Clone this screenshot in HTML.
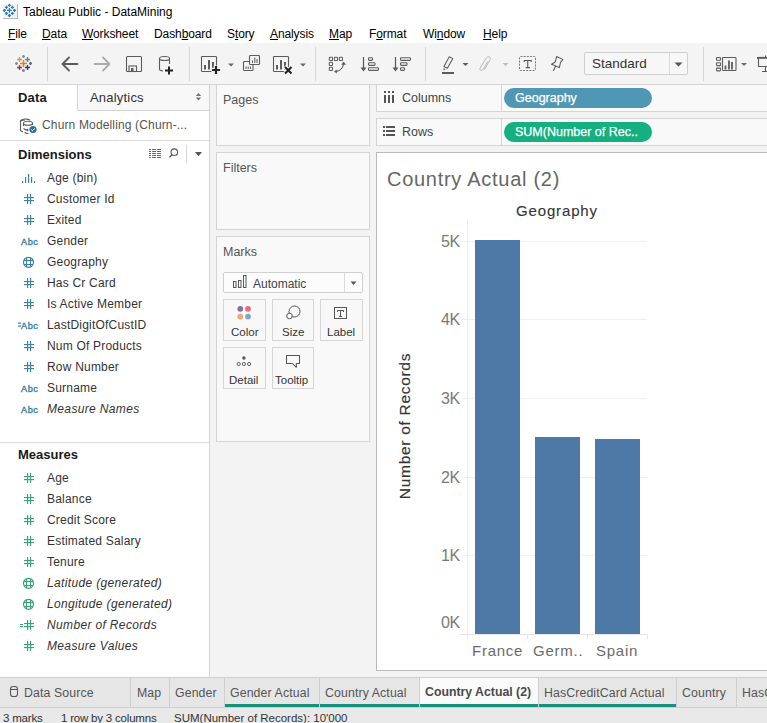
<!DOCTYPE html>
<html><head><meta charset="utf-8"><style>
*{box-sizing:border-box;margin:0;padding:0}
html,body{width:767px;height:723px;overflow:hidden;background:#fff;font-family:"Liberation Sans",sans-serif;color:#333}
.a{position:absolute}
.t{position:absolute;white-space:nowrap;line-height:1}
.menu{font-size:12px;color:#000;top:27.5px;letter-spacing:-0.1px}
.menu u{text-decoration:underline;text-underline-offset:1px;text-decoration-thickness:1px}
.card{position:absolute;background:#f9f9f9;border:1px solid #d4d4d4}
.fld{font-size:12px;color:#333;letter-spacing:0.2px}
svg{position:absolute;overflow:visible}
</style></head><body>
<div class="a" style="left:0px;top:0px;width:767px;height:43px;background:#fff"></div>
<svg style="left:0px;top:0px" width="25" height="25" viewBox="0 0 25 25"><rect x="3" y="3.7" width="14" height="14" fill="#f2f2f2"/><rect x="17" y="4" width="1" height="14.5" fill="#b8b8b8"/><rect x="3" y="18" width="15" height="1" fill="#b8b8b8"/><path d="M7.0 10.4H11.8M9.4 8.0V12.8" stroke="#2f7ab8" stroke-width="1.2"/><path d="M7.9 5.3H10.9M9.4 3.8V6.8" stroke="#2f7ab8" stroke-width="1.3"/><path d="M7.9 15.5H10.9M9.4 14.0V17.0" stroke="#2f7ab8" stroke-width="1.3"/><path d="M2.9000000000000004 10.4H5.9M4.4 8.9V11.9" stroke="#2f7ab8" stroke-width="1.3"/><path d="M13.0 10.4H16.0M14.5 8.9V11.9" stroke="#2f7ab8" stroke-width="1.3"/><path d="M4.9 7.3H7.9M6.4 5.8V8.8" stroke="#2f7ab8" stroke-width="1.3"/><path d="M10.9 7.3H13.9M12.4 5.8V8.8" stroke="#2f7ab8" stroke-width="1.3"/><path d="M4.9 13.4H7.9M6.4 11.9V14.9" stroke="#2f7ab8" stroke-width="1.3"/><path d="M10.9 13.4H13.9M12.4 11.9V14.9" stroke="#2f7ab8" stroke-width="1.3"/></svg>
<div class="t" style="left:23px;top:6px;font-size:12px;color:#000">Tableau Public - DataMining</div>
<div class="t menu" style="left:8px"><u>F</u>ile</div>
<div class="t menu" style="left:42px"><u>D</u>ata</div>
<div class="t menu" style="left:82px"><u>W</u>orksheet</div>
<div class="t menu" style="left:154px">Dash<u>b</u>oard</div>
<div class="t menu" style="left:227px">S<u>t</u>ory</div>
<div class="t menu" style="left:270px"><u>A</u>nalysis</div>
<div class="t menu" style="left:329px"><u>M</u>ap</div>
<div class="t menu" style="left:369px">F<u>o</u>rmat</div>
<div class="t menu" style="left:423px">Wi<u>n</u>dow</div>
<div class="t menu" style="left:483px"><u>H</u>elp</div>
<div class="a" style="left:0px;top:43px;width:767px;height:41px;background:#f4f4f4"></div>
<div class="a" style="left:47px;top:47px;width:1px;height:34px;background:#d6d6d6"></div>
<div class="a" style="left:189px;top:47px;width:1px;height:34px;background:#d6d6d6"></div>
<div class="a" style="left:315px;top:47px;width:1px;height:34px;background:#d6d6d6"></div>
<div class="a" style="left:425px;top:47px;width:1px;height:34px;background:#d6d6d6"></div>
<div class="a" style="left:703px;top:47px;width:1px;height:34px;background:#d6d6d6"></div>
<svg style="left:0px;top:0px" width="767" height="84" viewBox="0 0 767 84"><path d="M20.0 63.5H27.0M23.5 60.0V67.0" stroke="#e8762c" stroke-width="1.6"/><path d="M22.0 56.5H25.0M23.5 55.0V58.0" stroke="#7099a6" stroke-width="1.4"/><path d="M17.0 59.5H22.0M19.5 57.0V62.0" stroke="#eb912b" stroke-width="1.4"/><path d="M25.0 59.5H30.0M27.5 57.0V62.0" stroke="#5b879b" stroke-width="1.4"/><path d="M15.0 63.5H18.0M16.5 62.0V65.0" stroke="#7099a6" stroke-width="1.4"/><path d="M29.0 63.5H32.0M30.5 62.0V65.0" stroke="#59679e" stroke-width="1.4"/><path d="M17.0 67.5H22.0M19.5 65.0V70.0" stroke="#c72037" stroke-width="1.4"/><path d="M25.0 67.5H30.0M27.5 65.0V70.0" stroke="#1f457e" stroke-width="1.4"/><path d="M22.0 70.5H25.0M23.5 69.0V72.0" stroke="#7b7fb0" stroke-width="1.4"/></svg>
<svg style="left:0px;top:0px" width="767" height="84" viewBox="0 0 767 84"><path d="M62.5 64H77.5M69 57.5L62.5 64L69 70.5" stroke="#5c5c5c" stroke-width="1.8" fill="none" stroke-linecap="round" stroke-linejoin="round"/><path d="M94.5 64H109.5M103 57.5L109.5 64L103 70.5" stroke="#aaaaaa" stroke-width="1.8" fill="none" stroke-linecap="round" stroke-linejoin="round"/><rect x="126.5" y="56.5" width="15" height="15" rx="1" stroke="#5c5c5c" stroke-width="1.1" fill="none"/><rect x="129" y="66" width="7.5" height="5.5" stroke="#5c5c5c" stroke-width="1.1" fill="none"/><rect x="131" y="68" width="2.5" height="3.5" fill="#5c5c5c"/><ellipse cx="164.5" cy="58.5" rx="5" ry="2" stroke="#5c5c5c" stroke-width="1.1" fill="none"/><path d="M159.5 58.5V69C159.5 70 161 70.8 163 71M169.5 58.5V64" stroke="#5c5c5c" stroke-width="1.1" fill="none"/><path d="M165 70.5H173M169 66.5V74.5" stroke="#222" stroke-width="2"/><rect x="201.5" y="56.5" width="15" height="15" rx="0.8" stroke="#5c5c5c" stroke-width="1.1" fill="none"/><path d="M205 69.5V65M209 69.5V60M213 69.5V62" stroke="#5c5c5c" stroke-width="2"/><path d="M211.5 70H220.5M216 65.5V74.5" stroke="#f4f4f4" stroke-width="4.5"/><path d="M212 70H220M216 66V74" stroke="#222" stroke-width="2.2" /><path d="M228 63.5H234L231 66.5Z" fill="#6a6a6a"/><rect x="243.5" y="61.5" width="9.5" height="9" rx="0.8" stroke="#5c5c5c" stroke-width="1.1" fill="#f4f4f4"/><path d="M246 69V66.5M248.2 69V66.5M250.4 69V66.5" stroke="#5c5c5c" stroke-width="1"/><rect x="249.5" y="55.5" width="10" height="9" rx="0.8" stroke="#5c5c5c" stroke-width="1.1" fill="#f4f4f4"/><path d="M252.5 63V60.5M254.8 63V57.5M257 63V59" stroke="#5c5c5c" stroke-width="1"/><rect x="273.5" y="56.5" width="15" height="15" rx="0.8" stroke="#5c5c5c" stroke-width="1.1" fill="none"/><path d="M277 69.5V65M281 69.5V60M285 69.5V62" stroke="#5c5c5c" stroke-width="2"/><path d="M284.5 66.5L292 74M292 66.5L284.5 74" stroke="#f4f4f4" stroke-width="4"/><path d="M285 67L291.5 73.5M291.5 67L285 73.5" stroke="#222" stroke-width="2.1"/><path d="M300 63.5H306L303 66.5Z" fill="#6a6a6a"/><g stroke="#5c5c5c" stroke-width="1.05" fill="none"><rect x="329.3" y="57.3" width="3.2" height="3.2" rx="0.6"/><rect x="334.3" y="57.3" width="3.2" height="3.2" rx="0.6"/><rect x="339.3" y="57.3" width="3.2" height="3.2" rx="0.6"/><rect x="329.3" y="62.3" width="3.2" height="3.2" rx="0.6"/><rect x="329.3" y="67.3" width="3.2" height="3.2" rx="0.6"/><path d="M336 71.6Q342.6 70 343.6 64" stroke-width="1.1"/></g><path d="M341.3 64.8L343.6 61.6L346 64.8Z" fill="#5c5c5c"/><path d="M336.8 69.4L334 71.6L336.8 73.6Z" fill="#5c5c5c"/><path d="M363.5 57V70" stroke="#5c5c5c" stroke-width="1.3"/><path d="M360.5 67.5H366.5L363.5 71.5Z" fill="#5c5c5c"/><g stroke="#5c5c5c" stroke-width="1.1" fill="none"><rect x="368.5" y="57.8" width="4" height="2.6" rx="0.8"/><rect x="368.5" y="62.8" width="6.5" height="2.6" rx="0.8"/><rect x="368.5" y="67.8" width="10" height="2.6" rx="0.8"/></g><path d="M395.5 57V70" stroke="#5c5c5c" stroke-width="1.3"/><path d="M392.5 67.5H398.5L395.5 71.5Z" fill="#5c5c5c"/><g stroke="#5c5c5c" stroke-width="1.1" fill="none"><rect x="400.5" y="57.8" width="10" height="2.6" rx="0.8"/><rect x="400.5" y="62.8" width="6.5" height="2.6" rx="0.8"/><rect x="400.5" y="67.8" width="4" height="2.6" rx="0.8"/></g><path d="M449.3 56.8L452.8 58.6L447.4 68.3L443.9 66.5Z" stroke="#5c5c5c" stroke-width="1.05" fill="none" stroke-linejoin="round"/><path d="M443.6 68.2L445.6 69.3L443.4 70.6Z" fill="#5c5c5c"/><rect x="442" y="72" width="12" height="2" fill="#5c5c5c"/><path d="M462.5 63H468.5L465.5 66Z" fill="#5c5c5c"/><path d="M487.8 61.5L483 69.5C482 71.2 479 70.2 480 68.2L486.3 58C487.8 55.6 491.6 57 490.2 59.6L484.2 69.8" stroke="#b8b8b8" stroke-width="1" fill="none"/><path d="M502.5 63H508.5L505.5 66Z" fill="#bbbbbb"/><rect x="519.5" y="56.5" width="16" height="14" rx="1" stroke="#777" stroke-width="1" stroke-dasharray="2 1.2" fill="none"/><path d="M524.3 62V60.5H531.2V62M527.75 60.5V67.6M525.6 67.6H529.9" stroke="#555" stroke-width="1.1" fill="none"/><path d="M556.7 56.5L562.9 59.6L560.5 62.4L559.4 67.6L551.5 64.2L555.2 62Z" stroke="#5c5c5c" stroke-width="1.05" fill="none" stroke-linejoin="round"/><path d="M555.6 66.3L553.3 70.8" stroke="#5c5c5c" stroke-width="1.2"/><g stroke="#5c5c5c" stroke-width="1.1" fill="none"><rect x="716.5" y="57.5" width="4" height="2.8" rx="0.8"/><rect x="716.5" y="62.8" width="4" height="2.8" rx="0.8"/><rect x="716.5" y="68.1" width="4" height="2.8" rx="0.8"/><rect x="722.5" y="57.5" width="13.5" height="13" rx="0.8"/></g><path d="M725.5 69.5V65.5M729 69.5V60.5M732 69.5V62" stroke="#5c5c5c" stroke-width="1.8"/><path d="M741 63H747L744 66Z" fill="#6a6a6a"/><path d="M758.5 58.5V66.5H775M757 58H775" stroke="#5c5c5c" stroke-width="1.1" fill="none"/><path d="M757 57.8H775" stroke="#5c5c5c" stroke-width="1.8"/><path d="M765.5 55.5V57M765.5 66.5V71.5M762 71.5H770" stroke="#5c5c5c" stroke-width="1.1" fill="none"/></svg>
<div class="a" style="left:584px;top:52px;width:104px;height:23px;background:#f7f7f7;border:1px solid #cfcfcf;border-radius:2px"></div>
<div class="a" style="left:669px;top:53px;width:1px;height:21px;background:#d8d8d8"></div>
<svg style="left:0px;top:0px" width="767" height="84" viewBox="0 0 767 84"><path d="M674.5 62.5H682.5L678.5 66.5Z" fill="#555"/></svg>
<div class="t" style="left:592px;top:57px;font-size:13.5px;color:#333">Standard</div>
<div class="a" style="left:0px;top:84px;width:210px;height:593px;background:#fff;border-right:1px solid #d4d4d4"></div>
<div class="a" style="left:210px;top:84px;width:557px;height:593px;background:#f3f3f3"></div>
<div class="a" style="left:0px;top:84px;width:767px;height:1px;background:#d4d4d4"></div>
<div class="a" style="left:77px;top:85px;width:132px;height:26px;background:#f8f8f8;border-left:1px solid #d4d4d4;border-bottom:1px solid #d4d4d4"></div>
<div class="t" style="left:18px;top:91px;font-size:13px;font-weight:bold;color:#1a1a1a;letter-spacing:0.2px">Data</div>
<div class="t" style="left:90px;top:91px;font-size:13px;color:#333;letter-spacing:0.2px">Analytics</div>
<svg style="left:195px;top:93px" width="8" height="8" viewBox="0 0 8 8"><path d="M0.8 3L3.5 0L6.2 3ZM0.8 4.6L3.5 7.6L6.2 4.6Z" fill="#6e7581"/></svg>
<svg style="left:19px;top:116px" width="18" height="18" viewBox="0 0 18 18"><g stroke="#5a5a5a" stroke-width="1.1" fill="none"><path d="M6 4C3 4 1.5 4.5 1.5 5.5V14C1.5 15 3 15.5 4 16"/><path d="M1.5 5.5C1.5 4 4 3 6 3C8 3 11 3.5 11 4.5"/><ellipse cx="9" cy="7.3" rx="4.5" ry="2"/><path d="M4.5 7.3V10M13.5 7.3V9M4.8 12C4.8 13 6 14 9 14M6 16C6 17 7 17.5 9.5 17.5"/></g><path d="M8 12.5L10 14L8 15.5Z" fill="#5a5a5a"/><circle cx="14" cy="13.5" r="3.6" fill="#2c7392"/><path d="M12.2 13.5L13.5 14.8L15.8 12.3" stroke="#fff" stroke-width="1" fill="none"/></svg>
<div class="t" style="left:42px;top:119px;font-size:12px;color:#555;letter-spacing:0.15px">Churn Modelling (Churn-...</div>
<div class="a" style="left:0px;top:140px;width:209px;height:1px;background:#dcdcdc"></div>
<div class="t" style="left:18px;top:148px;font-size:13px;font-weight:bold;color:#1a1a1a">Dimensions</div>
<svg style="left:0px;top:0px" width="210" height="170" viewBox="0 0 210 170"><rect x="149" y="149" width="2" height="1" fill="#6a6a6a"/><rect x="152" y="149" width="4" height="1" fill="#6a6a6a"/><rect x="157" y="149" width="4" height="1" fill="#6a6a6a"/><rect x="149" y="151" width="2" height="1" fill="#6a6a6a"/><rect x="152" y="151" width="4" height="1" fill="#6a6a6a"/><rect x="157" y="151" width="4" height="1" fill="#6a6a6a"/><rect x="149" y="153" width="2" height="1" fill="#6a6a6a"/><rect x="152" y="153" width="4" height="1" fill="#6a6a6a"/><rect x="157" y="153" width="4" height="1" fill="#6a6a6a"/><rect x="149" y="155" width="2" height="1" fill="#6a6a6a"/><rect x="152" y="155" width="4" height="1" fill="#6a6a6a"/><rect x="157" y="155" width="4" height="1" fill="#6a6a6a"/><rect x="149" y="157" width="2" height="1" fill="#6a6a6a"/><rect x="152" y="157" width="4" height="1" fill="#6a6a6a"/><rect x="157" y="157" width="4" height="1" fill="#6a6a6a"/><circle cx="174.3" cy="152.2" r="3.3" stroke="#555" stroke-width="1.1" fill="none"/><path d="M172 154.6L169.5 157.3" stroke="#555" stroke-width="1.3"/></svg>
<div class="a" style="left:186px;top:145px;width:1px;height:18px;background:#d6d6d6"></div>
<svg style="left:0px;top:0px" width="210" height="200" viewBox="0 0 210 200"><path d="M195 152H202L198.5 156.2Z" fill="#555"/></svg>
<div class="a" style="left:0px;top:442px;width:209px;height:1px;background:#dcdcdc"></div>
<div class="t" style="left:18px;top:448px;font-size:13px;font-weight:bold;color:#1a1a1a">Measures</div>
<div class="t fld" style="left:47px;top:172px;">Age (bin)</div>
<div class="t fld" style="left:47px;top:193px;">Customer Id</div>
<div class="t fld" style="left:47px;top:214px;">Exited</div>
<div class="t" style="left:21px;top:238px;font-size:9.2px;color:#3f81a0;letter-spacing:0.5px;-webkit-text-stroke:0.4px #3f81a0">Abc</div>
<div class="t fld" style="left:47px;top:235px;">Gender</div>
<div class="t fld" style="left:47px;top:256px;">Geography</div>
<div class="t fld" style="left:47px;top:277px;">Has Cr Card</div>
<div class="t fld" style="left:47px;top:298px;">Is Active Member</div>
<div class="t" style="left:21px;top:322px;font-size:9.2px;color:#3f81a0;letter-spacing:0.5px;-webkit-text-stroke:0.4px #3f81a0">Abc</div>
<div class="t fld" style="left:47px;top:319px;">LastDigitOfCustID</div>
<div class="t fld" style="left:47px;top:340px;">Num Of Products</div>
<div class="t fld" style="left:47px;top:361px;">Row Number</div>
<div class="t" style="left:21px;top:385px;font-size:9.2px;color:#3f81a0;letter-spacing:0.5px;-webkit-text-stroke:0.4px #3f81a0">Abc</div>
<div class="t fld" style="left:47px;top:382px;">Surname</div>
<div class="t" style="left:21px;top:406px;font-size:9.2px;color:#3f81a0;letter-spacing:0.5px;-webkit-text-stroke:0.4px #3f81a0">Abc</div>
<div class="t fld" style="left:47px;top:403px;font-style:italic;letter-spacing:0.35px">Measure Names</div>
<div class="t fld" style="left:47px;top:472px;">Age</div>
<div class="t fld" style="left:47px;top:493px;">Balance</div>
<div class="t fld" style="left:47px;top:514px;">Credit Score</div>
<div class="t fld" style="left:47px;top:535px;">Estimated Salary</div>
<div class="t fld" style="left:47px;top:556px;">Tenure</div>
<div class="t fld" style="left:47px;top:577px;font-style:italic;letter-spacing:0.35px">Latitude (generated)</div>
<div class="t fld" style="left:47px;top:598px;font-style:italic;letter-spacing:0.35px">Longitude (generated)</div>
<div class="t fld" style="left:47px;top:619px;font-style:italic;letter-spacing:0.35px">Number of Records</div>
<div class="t fld" style="left:47px;top:640px;font-style:italic;letter-spacing:0.35px">Measure Values</div>
<svg style="left:0px;top:0px" width="210" height="677" viewBox="0 0 210 677"><g fill="#3f81a0"><rect x="22" y="181" width="1.2" height="2"/><rect x="25" y="177" width="1.2" height="6"/><rect x="28" y="174" width="1.2" height="9"/><rect x="31" y="177" width="1.2" height="6"/><rect x="34" y="181" width="1.2" height="2"/></g><g fill="#3f81a0"><rect x="27" y="194" width="1.15" height="10"/><rect x="30" y="194" width="1.15" height="10"/><rect x="24" y="197" width="10" height="1.15"/><rect x="24" y="200" width="10" height="1.15"/></g><g fill="#3f81a0"><rect x="27" y="215" width="1.15" height="10"/><rect x="30" y="215" width="1.15" height="10"/><rect x="24" y="218" width="10" height="1.15"/><rect x="24" y="221" width="10" height="1.15"/></g><circle cx="28.5" cy="262.3" r="5" stroke="#3f81a0" stroke-width="1.15" fill="none"/><g fill="#3f81a0"><rect x="26" y="257.5" width="1.1" height="9.6"/><rect x="30" y="257.5" width="1.1" height="9.6"/><rect x="23.8" y="260.0" width="9.4" height="1.1"/><rect x="23.8" y="264.0" width="9.4" height="1.1"/></g><g fill="#3f81a0"><rect x="27" y="278" width="1.15" height="10"/><rect x="30" y="278" width="1.15" height="10"/><rect x="24" y="281" width="10" height="1.15"/><rect x="24" y="284" width="10" height="1.15"/></g><g fill="#3f81a0"><rect x="27" y="299" width="1.15" height="10"/><rect x="30" y="299" width="1.15" height="10"/><rect x="24" y="302" width="10" height="1.15"/><rect x="24" y="305" width="10" height="1.15"/></g><rect x="18" y="322.5" width="3" height="1.2" fill="#3f81a0"/><rect x="18" y="325.5" width="3" height="1.2" fill="#3f81a0"/><g fill="#3f81a0"><rect x="27" y="341" width="1.15" height="10"/><rect x="30" y="341" width="1.15" height="10"/><rect x="24" y="344" width="10" height="1.15"/><rect x="24" y="347" width="10" height="1.15"/></g><g fill="#3f81a0"><rect x="27" y="362" width="1.15" height="10"/><rect x="30" y="362" width="1.15" height="10"/><rect x="24" y="365" width="10" height="1.15"/><rect x="24" y="368" width="10" height="1.15"/></g><g fill="#3aa27a"><rect x="27" y="473" width="1.15" height="10"/><rect x="30" y="473" width="1.15" height="10"/><rect x="24" y="476" width="10" height="1.15"/><rect x="24" y="479" width="10" height="1.15"/></g><g fill="#3aa27a"><rect x="27" y="494" width="1.15" height="10"/><rect x="30" y="494" width="1.15" height="10"/><rect x="24" y="497" width="10" height="1.15"/><rect x="24" y="500" width="10" height="1.15"/></g><g fill="#3aa27a"><rect x="27" y="515" width="1.15" height="10"/><rect x="30" y="515" width="1.15" height="10"/><rect x="24" y="518" width="10" height="1.15"/><rect x="24" y="521" width="10" height="1.15"/></g><g fill="#3aa27a"><rect x="27" y="536" width="1.15" height="10"/><rect x="30" y="536" width="1.15" height="10"/><rect x="24" y="539" width="10" height="1.15"/><rect x="24" y="542" width="10" height="1.15"/></g><g fill="#3aa27a"><rect x="27" y="557" width="1.15" height="10"/><rect x="30" y="557" width="1.15" height="10"/><rect x="24" y="560" width="10" height="1.15"/><rect x="24" y="563" width="10" height="1.15"/></g><circle cx="28.5" cy="583.3" r="5" stroke="#3aa27a" stroke-width="1.15" fill="none"/><g fill="#3aa27a"><rect x="26" y="578.5" width="1.1" height="9.6"/><rect x="30" y="578.5" width="1.1" height="9.6"/><rect x="23.8" y="581.0" width="9.4" height="1.1"/><rect x="23.8" y="585.0" width="9.4" height="1.1"/></g><circle cx="28.5" cy="604.3" r="5" stroke="#3aa27a" stroke-width="1.15" fill="none"/><g fill="#3aa27a"><rect x="26" y="599.5" width="1.1" height="9.6"/><rect x="30" y="599.5" width="1.1" height="9.6"/><rect x="23.8" y="602.0" width="9.4" height="1.1"/><rect x="23.8" y="606.0" width="9.4" height="1.1"/></g><rect x="20" y="624" width="3" height="1.1" fill="#3aa27a"/><rect x="20" y="626" width="3" height="1.1" fill="#3aa27a"/><g fill="#3aa27a"><rect x="27" y="620" width="1.15" height="10"/><rect x="30" y="620" width="1.15" height="10"/><rect x="24" y="623" width="10" height="1.15"/><rect x="24" y="626" width="10" height="1.15"/></g><g fill="#3aa27a"><rect x="27" y="641" width="1.15" height="10"/><rect x="30" y="641" width="1.15" height="10"/><rect x="24" y="644" width="10" height="1.15"/><rect x="24" y="647" width="10" height="1.15"/></g></svg>
<div class="card" style="left:216px;top:84px;width:154px;height:62px"></div>
<div class="t" style="left:223px;top:93.5px;font-size:12.5px;color:#555">Pages</div>
<div class="card" style="left:216px;top:152px;width:154px;height:78px"></div>
<div class="t" style="left:223px;top:161.5px;font-size:12.5px;color:#555">Filters</div>
<div class="card" style="left:216px;top:236px;width:154px;height:206px"></div>
<div class="t" style="left:223px;top:245.5px;font-size:12.5px;color:#555">Marks</div>
<div class="a" style="left:223px;top:272px;width:140px;height:21px;background:#fcfcfc;border:1px solid #d0d0d0;border-radius:2px"></div>
<div class="a" style="left:344px;top:273px;width:1px;height:19px;background:#dcdcdc"></div>
<svg style="left:0px;top:0px" width="767" height="723" viewBox="0 0 767 723"><path d="M350.5 281.5H356.5L353.5 285Z" fill="#555"/><g stroke="#555" stroke-width="1" fill="none"><rect x="233.5" y="281.5" width="2.5" height="6"/><rect x="238.5" y="280.5" width="2.5" height="7"/><rect x="243.5" y="275.5" width="2.5" height="12"/></g></svg>
<div class="t" style="left:253px;top:278px;font-size:12px;color:#444">Automatic</div>
<div class="a" style="left:223px;top:299px;width:43px;height:42px;background:#f8f8f8;border:1px solid #d6d6d6"></div>
<div class="t" style="left:231px;top:327px;font-size:11.5px;color:#333">Color</div>
<div class="a" style="left:272px;top:299px;width:42px;height:42px;background:#f8f8f8;border:1px solid #d6d6d6"></div>
<div class="t" style="left:282px;top:327px;font-size:11.5px;color:#333">Size</div>
<div class="a" style="left:320px;top:299px;width:43px;height:42px;background:#f8f8f8;border:1px solid #d6d6d6"></div>
<div class="t" style="left:327px;top:327px;font-size:11.5px;color:#333">Label</div>
<div class="a" style="left:223px;top:347px;width:43px;height:42px;background:#f8f8f8;border:1px solid #d6d6d6"></div>
<div class="t" style="left:229px;top:375px;font-size:11.5px;color:#333">Detail</div>
<div class="a" style="left:272px;top:347px;width:42px;height:42px;background:#f8f8f8;border:1px solid #d6d6d6"></div>
<div class="t" style="left:275px;top:375px;font-size:11.5px;color:#333">Tooltip</div>
<svg style="left:0px;top:0px" width="767" height="723" viewBox="0 0 767 723"><circle cx="240.3" cy="308.8" r="2.9" fill="#8a6fa0"/><circle cx="248" cy="308.8" r="2.9" fill="#ec6b7c"/><circle cx="240.3" cy="316.6" r="2.9" fill="#f0a57a"/><circle cx="248" cy="316.6" r="2.9" fill="#7ea6d2"/><circle cx="294.5" cy="311.5" r="5.5" stroke="#555" stroke-width="1" fill="none"/><circle cx="289.5" cy="316" r="2.8" stroke="#555" stroke-width="1" fill="#f8f8f8"/><rect x="334.5" y="307.5" width="12" height="11" stroke="#555" stroke-width="1" fill="none"/><path d="M337.5 310.5H343.5V312M337.5 310.5V312M340.5 310.5V316.5M339 316.5H342" stroke="#555" stroke-width="1" fill="none"/><circle cx="243.9" cy="358" r="1.7" fill="#555"/><circle cx="238.7" cy="364" r="1.6" stroke="#555" stroke-width="0.95" fill="none"/><circle cx="243.9" cy="364" r="1.6" stroke="#555" stroke-width="0.95" fill="none"/><circle cx="249.1" cy="364" r="1.6" stroke="#555" stroke-width="0.95" fill="none"/><path d="M286.5 355.5H299.5V363.5H296.3V367.3L292.5 363.5H286.5Z" stroke="#555" stroke-width="1.05" fill="none" stroke-linejoin="round"/></svg>
<div class="card" style="left:376px;top:84px;width:400px;height:28px"></div>
<div class="card" style="left:376px;top:118px;width:400px;height:28px"></div>
<div class="a" style="left:501px;top:85px;width:1px;height:26px;background:#d4d4d4"></div>
<div class="a" style="left:501px;top:119px;width:1px;height:26px;background:#d4d4d4"></div>
<svg style="left:0px;top:0px" width="767" height="160" viewBox="0 0 767 160"><g fill="#555"><rect x="384" y="91" width="2" height="2"/><rect x="388" y="91" width="2" height="2"/><rect x="392" y="91" width="2" height="2"/><rect x="384" y="95" width="2" height="8"/><rect x="388" y="95" width="2" height="8"/><rect x="392" y="95" width="2" height="8"/><rect x="383" y="126" width="2" height="2"/><rect x="383" y="130" width="2" height="2"/><rect x="383" y="134" width="2" height="2"/><rect x="386" y="126" width="9" height="2"/><rect x="386" y="130" width="9" height="2"/><rect x="386" y="134" width="9" height="2"/></g></svg>
<div class="t" style="left:402px;top:92px;font-size:12.5px;color:#444">Columns</div>
<div class="t" style="left:402px;top:126px;font-size:12.5px;color:#444">Rows</div>
<div class="a" style="left:504px;top:88px;width:148px;height:20px;border-radius:10px;background:#4f97b5"></div>
<div class="t" style="left:515px;top:92px;font-size:12.5px;color:#fff;-webkit-text-stroke:0.25px #fff">Geography</div>
<div class="a" style="left:504px;top:122px;width:148px;height:20px;border-radius:10px;background:#14b07f"></div>
<div class="t" style="left:515px;top:126px;font-size:12.5px;color:#fff;-webkit-text-stroke:0.25px #fff">SUM(Number of Rec..</div>
<div class="a" style="left:376px;top:152px;width:400px;height:519px;background:#fff;border:1px solid #b9b9b9"></div>
<div class="t" style="left:387px;top:168.5px;font-size:20px;color:#666;letter-spacing:0.72px">Country Actual (2)</div>
<div class="t" style="left:516px;top:202.5px;font-size:15px;color:#333;letter-spacing:0.85px;-webkit-text-stroke:0.1px #333">Geography</div>
<svg style="left:0px;top:0px" width="767" height="723" viewBox="0 0 767 723"><rect x="462" y="241" width="185" height="1" fill="#efefef"/><rect x="462" y="319" width="185" height="1" fill="#efefef"/><rect x="462" y="398" width="185" height="1" fill="#efefef"/><rect x="462" y="477" width="185" height="1" fill="#efefef"/><rect x="462" y="555" width="185" height="1" fill="#efefef"/><rect x="467" y="220" width="1" height="419" fill="#eeeeee"/><rect x="460" y="634" width="187" height="1" fill="#e6e6e6"/><rect x="527" y="634" width="1" height="5" fill="#e6e6e6"/><rect x="587" y="634" width="1" height="5" fill="#e6e6e6"/><rect x="647" y="634" width="1" height="5" fill="#e6e6e6"/><rect x="475" y="240" width="45" height="394" fill="#4e79a7"/><rect x="535" y="437" width="45" height="197" fill="#4e79a7"/><rect x="595" y="439" width="45" height="195" fill="#4e79a7"/></svg>
<div class="t" style="left:441px;top:233.5px;font-size:16px;color:#7a7a7a;letter-spacing:-0.3px">5K</div>
<div class="t" style="left:441px;top:312.0px;font-size:16px;color:#7a7a7a;letter-spacing:-0.3px">4K</div>
<div class="t" style="left:441px;top:390.5px;font-size:16px;color:#7a7a7a;letter-spacing:-0.3px">3K</div>
<div class="t" style="left:441px;top:469.5px;font-size:16px;color:#7a7a7a;letter-spacing:-0.3px">2K</div>
<div class="t" style="left:441px;top:547.5px;font-size:16px;color:#7a7a7a;letter-spacing:-0.3px">1K</div>
<div class="t" style="left:441px;top:615px;font-size:16px;color:#7a7a7a;letter-spacing:-0.3px">0K</div>
<div class="t" style="left:472px;top:643px;font-size:15px;color:#6a6a6a;letter-spacing:0.75px">France</div>
<div class="t" style="left:533px;top:643px;font-size:15px;color:#6a6a6a;letter-spacing:0.75px">Germ..</div>
<div class="t" style="left:596px;top:643px;font-size:15px;color:#6a6a6a;letter-spacing:0.75px">Spain</div>
<div class="t" style="left:405px;top:426px;font-size:15.5px;color:#333;letter-spacing:0.7px;-webkit-text-stroke:0.15px #333;transform:translate(-50%,-50%) rotate(-90deg)">Number of Records</div>
<div class="a" style="left:0px;top:677px;width:767px;height:31px;background:#e6e6e6;border-top:1px solid #cfcfcf;border-bottom:1px solid #cfcfcf"></div>
<div class="t" style="left:24px;top:687px;font-size:12.3px;color:#555;letter-spacing:0.12px;">Data Source</div>
<div class="a" style="left:130px;top:678px;width:1px;height:29px;background:#cfcfcf"></div>
<div class="t" style="left:137px;top:687px;font-size:12.3px;color:#555;letter-spacing:0.12px;">Map</div>
<div class="a" style="left:169px;top:678px;width:1px;height:29px;background:#cfcfcf"></div>
<div class="t" style="left:175px;top:687px;font-size:12.3px;color:#555;letter-spacing:0.12px;">Gender</div>
<div class="a" style="left:224px;top:678px;width:1px;height:29px;background:#cfcfcf"></div>
<div class="a" style="left:225px;top:704px;width:94px;height:3px;background:#16907a"></div>
<div class="t" style="left:230px;top:687px;font-size:12.3px;color:#555;letter-spacing:0.12px;">Gender Actual</div>
<div class="a" style="left:319px;top:678px;width:1px;height:29px;background:#cfcfcf"></div>
<div class="a" style="left:320px;top:704px;width:99px;height:3px;background:#16907a"></div>
<div class="t" style="left:325px;top:687px;font-size:12.3px;color:#555;letter-spacing:0.12px;">Country Actual</div>
<div class="a" style="left:420px;top:678px;width:118px;height:26px;background:#fafafa"></div>
<div class="a" style="left:419px;top:678px;width:1px;height:29px;background:#cfcfcf"></div>
<div class="a" style="left:420px;top:704px;width:118px;height:3px;background:#16907a"></div>
<div class="t" style="left:425px;top:686px;font-size:12.3px;color:#4a4a4a;font-weight:bold;">Country Actual (2)</div>
<div class="a" style="left:538px;top:678px;width:1px;height:29px;background:#cfcfcf"></div>
<div class="a" style="left:539px;top:704px;width:137px;height:3px;background:#16907a"></div>
<div class="t" style="left:544px;top:687px;font-size:12.3px;color:#555;letter-spacing:0.12px;">HasCreditCard Actual</div>
<div class="a" style="left:676px;top:678px;width:1px;height:29px;background:#cfcfcf"></div>
<div class="t" style="left:682px;top:687px;font-size:12.3px;color:#555;letter-spacing:0.12px;">Country</div>
<div class="a" style="left:736px;top:678px;width:1px;height:29px;background:#cfcfcf"></div>
<div class="t" style="left:742px;top:687px;font-size:12.3px;color:#555;letter-spacing:0.12px;">HasCreditCard</div>
<svg style="left:0px;top:0px" width="767" height="723" viewBox="0 0 767 723"><g stroke="#555" stroke-width="1.05" fill="none"><rect x="10.5" y="686.5" width="7" height="10" rx="2.6"/><path d="M10.8 689.5H17.2"/></g></svg>
<div class="a" style="left:0px;top:708px;width:767px;height:15px;background:#e9e9e9"></div>
<div class="t" style="left:3px;top:713px;font-size:11.5px;color:#333;letter-spacing:-0.2px">3 marks</div>
<div class="t" style="left:61px;top:713px;font-size:11.5px;color:#333;letter-spacing:-0.2px">1 row by 3 columns</div>
<div class="t" style="left:174px;top:713px;font-size:11.5px;color:#333">SUM(Number of Records): 10'000</div>
</body></html>
